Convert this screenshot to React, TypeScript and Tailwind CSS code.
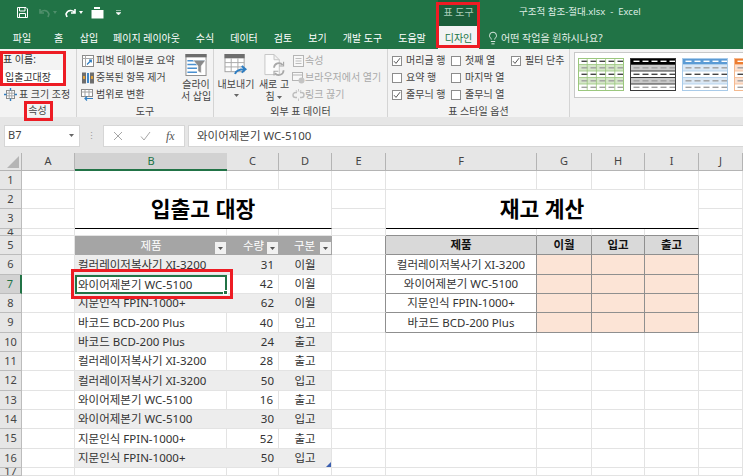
import React from "react";
import { Lightbulb } from "lucide-react";

function Thumb({ head, dashHead, band, line, strong }: { head: string; dashHead: string; band: string; line: string; strong?: boolean }) {
  const rows = [0, 1, 2, 3, 4];
  const cols = [0, 1, 2, 3, 4];
  return (
    <svg width="46" height="33" viewBox="0 0 46 33" className="shrink-0">
      {rows.map((r) => (
        <rect key={r} x="0" y={r * 6.5} width="46" height="6.5" fill={r === 0 ? head : r % 2 === 1 ? band : "#ffffff"} />
      ))}
      {rows.map((r) =>
        cols.map((c) => (
          <rect
            key={`${r}-${c}`}
            x={3.5 + c * 9}
            y={r * 6.5 + 2.6}
            width="6"
            height="1.4"
            fill={r === 0 ? dashHead : r % 2 === 1 || r === 4 ? "#a0a0a0" : "#444444"}
          />
        ))
      )}
      {[6.5, 13, 19.5, 26].map((y) => (
        <line key={y} x1="0" x2="46" y1={y} y2={y} stroke={line} strokeWidth={strong ? 1 : 0.8} />
      ))}
      {strong === undefined &&
        head === "#ffffff" &&
        [9.2, 18.4, 27.6, 36.8].map((x) => <line key={x} x1={x} x2={x} y1="0" y2="33" stroke={line} strokeWidth="0.8" />)}
      <rect x="0.5" y="0.5" width="45" height="32" fill="none" stroke={line} />
    </svg>
  );
}

function Check({ on, label }: { on?: boolean; label: string }) {
  return (
    <div className="flex items-center gap-[4px] h-[17px] whitespace-nowrap">
      <span className="w-[10px] h-[10px] bg-white border border-[#8c8c8c] flex items-center justify-center">
        {on && (
          <svg width="8" height="8" viewBox="0 0 8 8">
            <path d="M1 4.2 L3 6.4 L7 1.2" fill="none" stroke="#555" strokeWidth="1" />
          </svg>
        )}
      </span>
      <span>{label}</span>
    </div>
  );
}

const PivotIcon = () => (
  <svg width="12" height="12" viewBox="0 0 12 12">
    <rect x="0.5" y="0.5" width="11" height="11" fill="#fff" stroke="#8a8a8a" />
    <path d="M0.5 3.5H11.5M3.5 0.5V11.5" stroke="#a8a8a8" />
    <path d="M5 9.5 L9 5.5 M7 5.2H9.3V7.5" fill="none" stroke="#2f7ec2" strokeWidth="1.2" />
  </svg>
);
const DedupIcon = () => (
  <svg width="12" height="12" viewBox="0 0 12 12">
    <rect x="0" y="0.5" width="4" height="11" fill="#6d6d6d" />
    <rect x="8" y="0.5" width="4" height="11" fill="#6d6d6d" />
    <rect x="1" y="4" width="2" height="3" fill="#e2a23a" />
    <rect x="9" y="4" width="2" height="3" fill="#e2a23a" />
    <rect x="5" y="1" width="2" height="10" fill="#3f87c7" />
  </svg>
);
const RangeIcon = () => (
  <svg width="13" height="12" viewBox="0 0 13 12">
    <rect x="0.5" y="0.5" width="11" height="7" fill="#fff" stroke="#8a8a8a" />
    <path d="M0.5 3H11.5M4 0.5V7.5M8 0.5V7.5" stroke="#a0a0a0" />
    <path d="M12 9.5H4 M6 7.5 L4 9.5 L6 11.5" fill="none" stroke="#2f7ec2" strokeWidth="1.2" />
  </svg>
);
const ResizeIcon = () => (
  <svg width="13" height="13" viewBox="0 0 13 13">
    <rect x="2.5" y="2.5" width="8" height="8" fill="#fff" stroke="#8a8a8a" />
    <path d="M2.5 5.2H10.5M2.5 7.8H10.5M5.2 2.5V10.5M7.8 2.5V10.5" stroke="#a8a8a8" />
    <path d="M6.5 0V2.4M6.5 10.6V13M0 6.5H2.4M10.6 6.5H13" stroke="#2f7ec2" strokeWidth="1.4" />
  </svg>
);
const SlicerIcon = () => (
  <svg width="22" height="22" viewBox="0 0 22 23">
    <rect x="0.5" y="0.5" width="21" height="22" fill="#fff" stroke="#8c8c8c" />
    <rect x="0" y="0" width="22" height="3.5" fill="#6d6d6d" />
    <path d="M2 7H20M2 11H12M2 15H12M2 19H12" stroke="#4a90d0" strokeWidth="1.6" />
    <path d="M8 6.5H21L16.5 12.5V20L13 18V12.5Z" fill="#8a8a8a" stroke="#fff" strokeWidth="0.6" />
  </svg>
);
const ExportIcon = () => (
  <svg width="24" height="22" viewBox="0 0 24 23">
    <rect x="0.5" y="0.5" width="20" height="18" fill="#fff" stroke="#a0a0a0" />
    <rect x="0" y="0" width="21" height="4.5" fill="#6d6d6d" />
    <path d="M0.5 9H20.5M0.5 13.5H20.5M7 4.5V18.5M14 4.5V18.5" stroke="#a8a8a8" />
    <path d="M11 21C12 17 15 16 21 16 M18 12.5 L22 16 L18 19.5" fill="none" stroke="#2f7ec2" strokeWidth="2" />
  </svg>
);
const RefreshIcon = () => (
  <svg width="23" height="22" viewBox="0 0 23 23">
    <path d="M1.5 0.5H11L16.5 6V21.5H1.5Z M11 0.5V6H16.5" fill="#fbfbfb" stroke="#c4c4c4" />
    <path d="M11 14.5A5 5 0 0 1 20 11.5 M21 17A5 5 0 0 1 12 20" fill="none" stroke="#a8a8a8" strokeWidth="1.8" />
    <path d="M21 8V12.5H16.5 M11 22.5V18H15.5" fill="none" stroke="#a8a8a8" strokeWidth="1.2" />
  </svg>
);
const DimProp = () => (
  <svg width="11" height="12" viewBox="0 0 11 12">
    <rect x="0.5" y="0.5" width="10" height="11" fill="#f8f8f8" stroke="#b5b5b5" />
    <path d="M2.5 3.5H8.5M2.5 6H8.5M2.5 8.5H8.5" stroke="#bdbdbd" />
  </svg>
);
const DimBrowser = () => (
  <svg width="13" height="12" viewBox="0 0 13 12">
    <rect x="0.5" y="0.5" width="10" height="8" fill="#f8f8f8" stroke="#b5b5b5" />
    <path d="M0.5 3H10.5" stroke="#b5b5b5" />
    <circle cx="9.5" cy="8.5" r="3" fill="#c4c4c4" />
  </svg>
);
const DimLink = () => (
  <svg width="13" height="12" viewBox="0 0 13 12">
    <path d="M5 3.5H3.5A2.5 2.5 0 0 0 3.5 8.5H5 M8 3.5H9.5A2.5 2.5 0 0 1 9.5 8.5H8" fill="none" stroke="#bdbdbd" strokeWidth="1.4" />
    <path d="M6.5 0V2.5M6.5 9.5V12M4 1L5 3M9 1L8 3" stroke="#c8c8c8" />
  </svg>
);

const Caret = () => (
  <svg width="5" height="3" viewBox="0 0 5 3" className="inline-block">
    <path d="M0 0H5L2.5 3Z" fill="#666" />
  </svg>
);

function Filter() {
  return (
    <span className="absolute right-[1px] bottom-[1px] w-[11px] h-[12px] bg-[#f1f1f1] flex items-center justify-center">
      <svg width="5" height="3" viewBox="0 0 5 3">
        <path d="M0 0H5L2.5 3Z" fill="#555" />
      </svg>
    </span>
  );
}

const tabs: [string, number][] = [
  ["파일", 44],
  ["홈", 29],
  ["삽입", 32],
  ["페이지 레이아웃", 83],
  ["수식", 34],
  ["데이터", 44],
  ["검토", 34],
  ["보기", 35],
  ["개발 도구", 55],
  ["도움말", 44],
];

const rowHeights = "grid-rows-[18px_19px_19px_20px_7px_19px_20px_19px_19px_20px_19px_19px_20px_19px_19px_20px_19px_8px]";
const grid = "border-r border-b border-[#e3e3e3]";
const dark = "border-r border-b border-[#8f8f8f]";
const rowHead = "bg-[#e6e6e6] border-r border-b border-[#bcbcbc] flex items-center justify-center text-[11px] text-[#444] overflow-hidden";
const colHead = "bg-[#e6e6e6] border-r border-b border-[#b4b4b4] flex items-center justify-center text-[11px] text-[#444]";

const ledger: [string, number, string][] = [
  ["컬러레이저복사기 XI-3200", 31, "이월"],
  ["와이어제본기 WC-5100", 42, "이월"],
  ["지문인식 FPIN-1000+", 62, "이월"],
  ["바코드 BCD-200 Plus", 40, "입고"],
  ["바코드 BCD-200 Plus", 24, "출고"],
  ["컬러레이저복사기 XI-3200", 28, "출고"],
  ["컬러레이저복사기 XI-3200", 50, "입고"],
  ["와이어제본기 WC-5100", 16, "출고"],
  ["와이어제본기 WC-5100", 30, "입고"],
  ["지문인식 FPIN-1000+", 52, "출고"],
  ["지문인식 FPIN-1000+", 50, "입고"],
];
const stock = ["컬러레이저복사기 XI-3200", "와이어제본기 WC-5100", "지문인식 FPIN-1000+", "바코드 BCD-200 Plus"];

function Row({ n }: { n: number }) {
  const active = n === 7;
  const head = (
    <div className={active ? "bg-[#d2d2d2] border-r-2 border-b border-r-[#217346] border-b-[#bcbcbc] flex items-center justify-center text-[11px] text-[#217346] overflow-hidden" : rowHead}>
      {n}
    </div>
  );
  const a = <div className={grid} />;
  const j = <div className={grid} />;
  let left: React.ReactNode;
  let right: React.ReactNode;

  if (n === 2) {
    left = (
      <div className="col-span-3 row-span-2 border-r border-b border-r-[#e3e3e3] border-b-black flex items-center justify-center text-[21.5px] font-bold text-black">
        입출고 대장
      </div>
    );
    right = (
      <>
        <div className={grid} />
        <div className="col-span-4 row-span-2 border-r border-b border-r-[#e3e3e3] border-b-black flex items-center justify-center text-[21.5px] font-bold text-black">
          재고 계산
        </div>
      </>
    );
  } else if (n === 3) {
    left = null;
    right = <div className={grid} />;
  } else if (n === 5) {
    left = (
      <>
        <div className="relative bg-[#a5a5a5] flex items-start justify-center pt-[1px] text-[11.5px] text-white">제품<Filter /></div>
        <div className="relative bg-[#a5a5a5] flex items-start pl-[16px] pt-[1px] text-[11.5px] text-white">수량<Filter /></div>
        <div className="relative bg-[#a5a5a5] flex items-start pl-[15px] pt-[1px] text-[11.5px] text-white">구분<Filter /></div>
      </>
    );
    right = (
      <>
        <div className="border-r border-b border-r-[#8f8f8f] border-b-[#e3e3e3]" />
        {["제품", "이월", "입고", "출고"].map((t) => (
          <div key={t} className={`${dark} bg-[#d9d9d9] flex items-center justify-center text-[11.5px] font-bold text-[#111]`}>
            {t}
          </div>
        ))}
      </>
    );
  } else if (n >= 6 && n <= 16) {
    const [name, qty, kind] = ledger[n - 6];
    const band = n % 2 === 0;
    const base = "flex items-center text-[11.5px] text-[#333] overflow-visible whitespace-nowrap";
    left = (
      <>
        {active ? (
          <div className={`${base} relative border-2 border-[#217346] pl-[1px] bg-white`}>
            {name}
            <span className="absolute right-[-3px] bottom-[-3px] w-[5px] h-[5px] bg-[#217346] border border-white" />
          </div>
        ) : (
          <div className={`${base} pl-[3px] ${band ? "bg-[#ededed] border-b border-b-[#e3e3e3]" : "bg-white border-r border-b border-[#e3e3e3]"}`}>{name}</div>
        )}
        <div className={`${base} justify-end pr-[5px] ${band ? "bg-[#ededed] border-b border-b-[#e3e3e3]" : "bg-white border-r border-b border-[#e3e3e3]"}`}>{qty}</div>
        <div className={`${base} relative justify-center ${band ? "bg-[#ededed] border-r border-b border-[#e3e3e3]" : "bg-white border-r border-b border-[#e3e3e3]"}`}>
          {kind}
          {n === 16 && (
            <svg width="5" height="5" viewBox="0 0 5 5" className="absolute right-0 bottom-0">
              <path d="M5 0V5H0Z" fill="#3b5fb0" />
            </svg>
          )}
        </div>
      </>
    );
    right =
      n <= 9 ? (
        <>
          <div className="border-r border-b border-r-[#8f8f8f] border-b-[#e3e3e3]" />
          <div className={`${dark} bg-white flex items-center justify-center text-[11.5px] text-[#333] whitespace-nowrap`}>{stock[n - 6]}</div>
          <div className={`${dark} bg-[#fce4d6]`} />
          <div className={`${dark} bg-[#fce4d6]`} />
          <div className={`${dark} bg-[#fce4d6]`} />
        </>
      ) : (
        <>
          <div className={grid} />
          <div className={grid} />
          <div className={grid} />
          <div className={grid} />
          <div className={grid} />
        </>
      );
  } else {
    left = (
      <>
        <div className={grid} />
        <div className={grid} />
        <div className={grid} />
      </>
    );
    const rightLine = n === 4 ? "border-r border-b border-r-[#e3e3e3] border-b-[#8f8f8f]" : grid;
    right = (
      <>
        <div className={grid} />
        <div className={rightLine} />
        <div className={rightLine} />
        <div className={rightLine} />
        <div className={rightLine} />
      </>
    );
  }
  return (
    <>
      {head}
      {a}
      {left}
      {right}
      {j}
    </>
  );
}

const groupLabel = "text-center h-[15px] leading-[15px] pt-[1px] text-[#444] shrink-0";

export default function App() {
  const numbers = Array.from({ length: 17 }, (_, i) => i + 1);
  return (
    <div className="relative w-[743px] h-[476px] overflow-hidden bg-white text-[10px] text-[#444] font-['Noto_Sans','Noto_Sans_CJK_KR',sans-serif]">
      {/* title bar */}
      <div className="h-[26px] bg-[#217346] flex text-white">
        <div className="w-[438px] flex items-center pl-[17px] pb-[1px]">
          <svg width="11" height="11" viewBox="0 0 11 11">
            <path d="M0.5 0.5H9L10.5 2V10.5H0.5Z" fill="none" stroke="#fff" />
            <path d="M2.5 1V4H8V1M2.5 10V6.5H8.5V10" fill="none" stroke="#fff" />
          </svg>
          <svg width="11" height="10" viewBox="0 0 11 10" className="ml-[11px]">
            <path d="M1 1V5H5 M1 5C3 1.5 8 1.5 10 6 L9 9" fill="none" stroke="#4f8f6b" strokeWidth="1.6" />
          </svg>
          <svg width="4" height="3" viewBox="0 0 4 3" className="ml-[3px]">
            <path d="M0 0H4L2 3Z" fill="#4f8f6b" />
          </svg>
          <svg width="11" height="10" viewBox="0 0 11 10" className="ml-[8px]">
            <path d="M10 1V5H6 M10 5C8 1.5 3 1.5 1 6 L2 9" fill="none" stroke="#fff" strokeWidth="1.6" />
          </svg>
          <svg width="4" height="3" viewBox="0 0 4 3" className="ml-[3px]">
            <path d="M0 0H4L2 3Z" fill="#fff" />
          </svg>
          <svg width="13" height="12" viewBox="0 0 13 12" className="ml-[8px]">
            <path d="M0.5 3H12.5V11.5H0.5Z" fill="#fff" />
            <path d="M3 0H9V2H3Z" fill="#fff" />
          </svg>
          <svg width="5" height="5" viewBox="0 0 5 5" className="ml-[12px]">
            <path d="M0 0.5H5 M0 2.5H5L2.5 5Z" fill="#fff" stroke="#fff" strokeWidth="0.5" />
          </svg>
        </div>
        <div className="w-[41px] bg-[#1b5e3a] flex items-center justify-center pb-[1px] text-[10px] text-[#a9cdb8]">표 도구</div>
        <div className="ml-[40px] flex items-center pb-[1px] text-[9.5px] text-[#dcebe2] whitespace-nowrap">구조적 참조-절대.xlsx&nbsp;&nbsp;-&nbsp;&nbsp;Excel</div>
      </div>
      {/* tabs */}
      <div className="h-[23px] bg-[#217346] flex items-center text-[10px] text-white">
        {tabs.map(([t, w]) => (
          <div key={t} style={{ width: w }} className="text-center whitespace-nowrap shrink-0 pt-[1px]">
            {t}
          </div>
        ))}
        <div className="ml-[4px] w-[41px] h-full bg-[#f3f3f3] text-[#217346] flex items-center justify-center pt-[1px]">디자인</div>
        <Lightbulb size={14} strokeWidth={1.4} className="ml-[7px] text-white" />
        <div className="ml-[1px] pt-[1px] text-[#e4f0e9] whitespace-nowrap">어떤 작업을 원하시나요?</div>
      </div>
      {/* ribbon */}
      <div className="h-[68px] bg-[#f3f3f3] flex">
        <div className="w-[77px] shrink-0 flex flex-col border-r border-[#d4d4d4]">
          <div className="pl-[3px] pt-[3px] h-[21px] shrink-0 text-[#333]">표 이름:</div>
          <div className="ml-[2px] w-[61px] h-[14px] shrink-0 bg-white flex items-center pl-[3px] text-[#333]">입출고대장</div>
          <div className="flex items-center gap-[2px] pl-[4px] mt-[3px] h-[15px] shrink-0 whitespace-nowrap">
            <ResizeIcon />
            <span>표 크기 조정</span>
          </div>
          <div className={`${groupLabel} pr-[1px]`}>속성</div>
        </div>
        <div className="w-[137px] shrink-0 flex flex-col border-r border-[#d4d4d4]">
          <div className="flex flex-1">
            <div className="pl-[4px] pt-[3px] w-[104px] shrink-0">
              {([
                [<PivotIcon key="p" />, "피벗 테이블로 요약"],
                [<DedupIcon key="d" />, "중복된 항목 제거"],
                [<RangeIcon key="r" />, "범위로 변환"],
              ] as [React.ReactNode, string][]).map(([icon, label]) => (
                <div key={label} className="flex items-center gap-[2px] h-[17px] whitespace-nowrap text-[#444]">
                  <span className="w-[13px] flex justify-center">{icon}</span>
                  {label}
                </div>
              ))}
            </div>
            <div className="flex flex-col items-center w-[30px] pt-[5px] leading-[12px]">
              <SlicerIcon />
              <div className="mt-[2px] text-center text-[#444] whitespace-nowrap">
                슬라이
                <br />
                서 삽입
              </div>
            </div>
          </div>
          <div className={groupLabel}>도구</div>
        </div>
        <div className="w-[174px] shrink-0 flex flex-col border-r border-[#d4d4d4]">
          <div className="flex flex-1">
            <div className="w-[43px] shrink-0 flex flex-col items-center pt-[5px] pl-[1px] leading-[12px] text-[#444]">
              <ExportIcon />
              <div className="mt-[2px] whitespace-nowrap">내보내기</div>
              <div className="mt-[4px] h-[8px] flex items-start">
                <Caret />
              </div>
            </div>
            <div className="w-[34px] shrink-0 flex flex-col items-center pt-[5px] leading-[12px] text-[#444]">
              <RefreshIcon />
              <div className="mt-[2px] text-center whitespace-nowrap">
                새로 고
                <br />
                침 <Caret />
              </div>
            </div>
            <div className="pt-[3px] text-[#a9a9a9]">
              {([
                [<DimProp key="a" />, "속성"],
                [<DimBrowser key="b" />, "브라우저에서 열기"],
                [<DimLink key="c" />, "링크 끊기"],
              ] as [React.ReactNode, string][]).map(([icon, label]) => (
                <div key={label} className="flex items-center h-[17px] whitespace-nowrap">
                  <span className="w-[14px] flex justify-center">{icon}</span>
                  {label}
                </div>
              ))}
            </div>
          </div>
          <div className={groupLabel}>외부 표 데이터</div>
        </div>
        <div className="w-[182px] shrink-0 flex flex-col border-r border-[#d4d4d4]">
          <div className="flex flex-1 pl-[4px] pt-[3px]">
            <div className="w-[59px]">
              <Check on label="머리글 행" />
              <Check label="요약 행" />
              <Check on label="줄무늬 행" />
            </div>
            <div className="w-[60px]">
              <Check label="첫째 열" />
              <Check label="마지막 열" />
              <Check label="줄무늬 열" />
            </div>
            <div>
              <Check on label="필터 단추" />
            </div>
          </div>
          <div className={groupLabel}>표 스타일 옵션</div>
        </div>
        <div className="flex-1 pl-[4px] pt-[3px]">
          <div className="h-[46px] bg-white border border-[#c8c8c8] border-r-0 flex gap-[6px] pl-[3px] pt-[5px] overflow-hidden">
            <Thumb head="#ffffff" dashHead="#444444" band="#d5e6c8" line="#9bc77e" />
            <Thumb head="#000000" dashHead="#ffffff" band="#c9c9c9" line="#3a3a3a" strong />
            <Thumb head="#5b9bd5" dashHead="#ffffff" band="#dbe8f5" line="#a9cbe9" />
            <Thumb head="#ed7d31" dashHead="#ffffff" band="#fbe0d0" line="#f4b98f" />
          </div>
        </div>
      </div>
      {/* formula bar */}
      <div className="h-[36px] bg-[#e6e6e6] flex items-center pl-[4px] pt-[1px]">
        <div className="w-[76px] h-[22px] bg-white border border-[#d6d6d6] flex items-center justify-between pl-[3px] pr-[5px] text-[11px] text-[#444]">
          B7
          <Caret />
        </div>
        <div className="w-[23px] flex justify-center text-[#9a9a9a] text-[9px] leading-[5px]">⋮</div>
        <div className="w-[82px] h-[22px] bg-white border border-[#d6d6d6] flex items-center pl-[9px] shrink-0">
          <svg width="10" height="10" viewBox="0 0 10 10">
            <path d="M1 1L9 9M9 1L1 9" stroke="#a6a6a6" strokeWidth="1" />
          </svg>
          <svg width="11" height="10" viewBox="0 0 11 10" className="ml-[17px]">
            <path d="M1 5.5L4 9L10 1" fill="none" stroke="#a6a6a6" strokeWidth="1" />
          </svg>
          <span className="ml-[15px] text-[12px] italic font-['Liberation_Serif',serif] text-[#555]">fx</span>
        </div>
        <div className="ml-[3px] flex-1 h-[22px] bg-white border border-[#d6d6d6] border-r-0 flex items-center pl-[8px] text-[11.5px] text-[#444] whitespace-nowrap">
          와이어제본기 WC-5100
        </div>
      </div>
      {/* sheet */}
      <div className={`grid grid-cols-[22px_53px_152px_52px_53px_54px_151px_55px_53px_54px_44px] ${rowHeights}`}>
        <div className="bg-[#e6e6e6] border-r border-b border-[#b4b4b4] flex items-end justify-end pr-[2px] pb-[2px]">
          <svg width="12" height="12" viewBox="0 0 12 12">
            <path d="M12 0V12H0Z" fill="#b5b5b5" />
          </svg>
        </div>
        {["A", "B", "C", "D", "E", "F", "G", "H", "I", "J"].map((c) =>
          c === "B" ? (
            <div key={c} className="bg-[#d2d2d2] border-b-2 border-[#217346] flex items-center justify-center text-[11px] text-[#217346]">
              {c}
            </div>
          ) : (
            <div key={c} className={colHead}>
              {c}
            </div>
          )
        )}
        {numbers.map((n) => (
          <Row key={n} n={n} />
        ))}
      </div>
      {/* red callouts */}
      <div className="absolute left-0 top-[51px] w-[66px] h-[35px] border-[3px] border-[#ed1c24]" />
      <div className="absolute left-[24px] top-[101px] w-[29px] h-[20px] border-[3px] border-[#ed1c24]" />
      <div className="absolute left-[436px] top-[2px] w-[44px] h-[46px] border-[3px] border-[#ed1c24]" />
      <div className="absolute left-[71px] top-[269px] w-[162px] h-[30px] border-[3px] border-[#ed1c24]" />
    </div>
  );
}
